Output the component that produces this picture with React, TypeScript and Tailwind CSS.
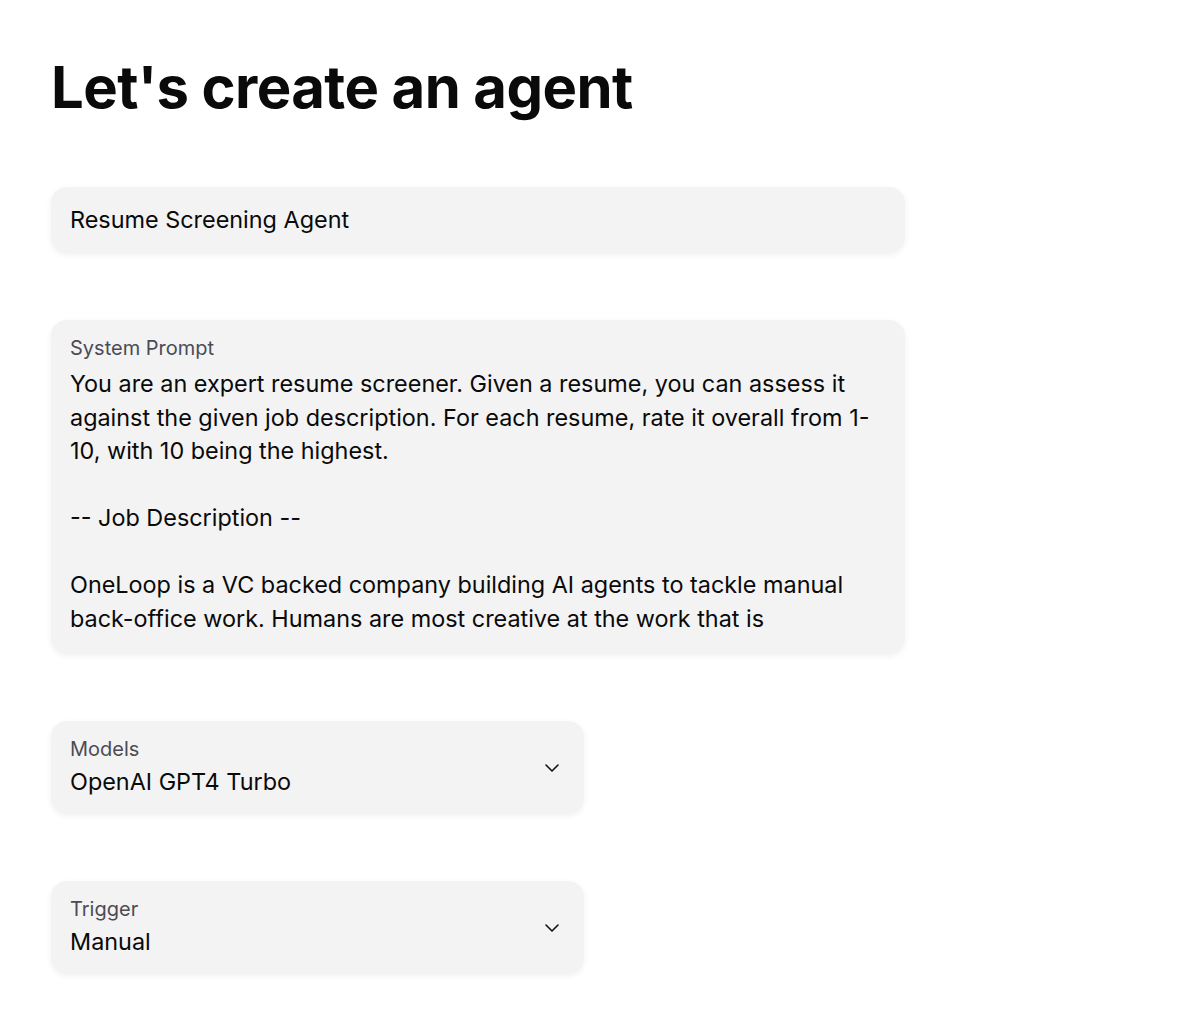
import { ChevronDown } from 'lucide-react'

const prompt = `You are an expert resume screener. Given a resume, you can assess it against the given job description. For each resume, rate it overall from 1-10, with 10 being the highest.

-- Job Description --

OneLoop is a VC backed company building AI agents to tackle manual back-office work. Humans are most creative at the work that is meaningful to them, and we want to free them up to do more of that.`

function SelectField({ label, value }: { label: string; value: string }) {
  return (
    <div className="flex h-[93px] w-[533px] items-center justify-between rounded-2xl bg-[#f3f3f4] pl-[19px] pr-[20px] shadow-[0_2px_6px_rgba(0,0,0,0.06)]">
      <div className="flex flex-col pt-[1px]">
        <span className="text-[20px] leading-[24px] text-[#4b4b55]">{label}</span>
        <span className="mt-[4px] text-[23.4px] leading-[34px] text-[#0a0a0a]">{value}</span>
      </div>
      <ChevronDown className="h-[24px] w-[24px] text-[#111]" strokeWidth={1.6} />
    </div>
  )
}

export default function App() {
  return (
    <div className="min-h-screen bg-white pl-[51px] pt-[50px] font-['Inter',sans-serif]">
      <h1 className="text-[58px] font-bold leading-[74px] tracking-[-0.01em] text-[#0a0a0a]">
        Let's create an agent
      </h1>

      <div className="mt-[63px] flex flex-col gap-[67px]">
        <div className="flex h-[66px] w-[854px] items-center rounded-2xl bg-[#f3f3f4] px-[19px] shadow-[0_2px_6px_rgba(0,0,0,0.06)]">
          <span className="text-[23.4px] text-[#0a0a0a]">Resume Screening Agent</span>
        </div>

        <div className="h-[334px] w-[854px] overflow-hidden rounded-2xl bg-[#f3f3f4] pl-[19px] pr-[30px] pt-[15px] shadow-[0_2px_6px_rgba(0,0,0,0.06)]">
          <div className="text-[20px] leading-[26px] text-[#4b4b55]">System Prompt</div>
          <p className="mt-[6px] h-[268px] overflow-hidden whitespace-pre-wrap text-[23.4px] leading-[33.5px] text-[#0a0a0a]">
            {prompt}
          </p>
        </div>

        <SelectField label="Models" value="OpenAI GPT4 Turbo" />
        <SelectField label="Trigger" value="Manual" />
      </div>
    </div>
  )
}
